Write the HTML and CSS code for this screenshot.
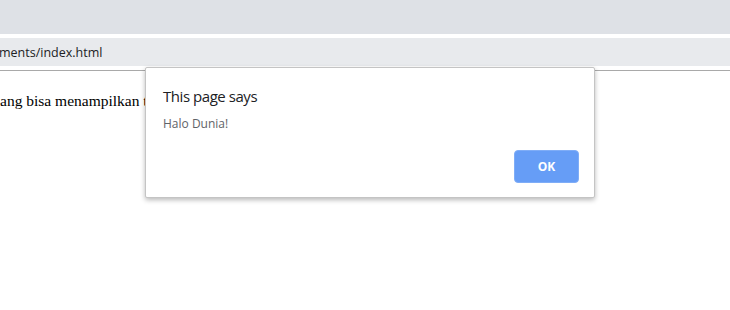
FILE: index.html
```html
<!DOCTYPE html>
<html>
<head>
<meta charset="utf-8">
<link rel="stylesheet" href="styles.css">
</head>
<body>
<div class="chrome">
  <div class="tabstrip"></div>
  <div class="toolbar"><span class="url">ments/index.html</span></div>
</div>
<div class="page">
  <p class="content">ang bisa menampilkan teks</p>
</div>
<div class="dialog">
  <div class="title">This page says</div>
  <div class="message">Halo Dunia!</div>
  <div class="actions"><button class="ok">OK</button></div>
</div>
</body>
</html>
```
FILE: styles.css
```css
html, body {
  margin: 0;
  padding: 0;
  background: #fff;
  width: 730px;
  height: 310px;
  overflow: hidden;
}
.chrome {
  display: flex;
  flex-direction: column;
  gap: 4px;
  padding-bottom: 4px;
  border-bottom: 1px solid #a9a9a9;
}
.tabstrip {
  height: 34px;
  background: #dee1e6;
}
.toolbar {
  height: 28px;
  background: #e8eaed;
  display: flex;
  align-items: center;
}
.url {
  font-family: "Open Sans", sans-serif;
  font-size: 12.5px;
  color: #202124;
  margin-left: -1px;
}
.page {
  padding-top: 21px;
}
.content {
  margin: 0;
  font-family: "Liberation Serif", serif;
  font-size: 15.5px;
  line-height: 18px;
  color: #000;
  white-space: nowrap;
}
.dialog {
  position: absolute;
  left: 145px;
  top: 67px;
  width: 448px;
  height: 129px;
  background: #fff;
  border: 1px solid #c4c4c4;
  border-radius: 2px;
  box-shadow: 0 2px 5px rgba(0,0,0,0.28);
  box-sizing: content-box;
  display: flex;
  flex-direction: column;
  font-family: "Open Sans", sans-serif;
}
.title {
  margin: 18px 0 0 17px;
  font-size: 15px;
  letter-spacing: -0.45px;
  line-height: 20px;
  color: #202124;
}
.message {
  margin: 10px 0 0 17px;
  font-size: 12px;
  line-height: 16px;
  color: #5f6368;
}
.actions {
  display: flex;
  justify-content: flex-end;
  margin-top: auto;
  padding: 0 15px 14px 0;
}
.ok {
  width: 65px;
  height: 33px;
  border: 1px solid #7fadf7;
  border-radius: 4px;
  background: #669df6;
  color: #fff;
  font-family: "Open Sans", sans-serif;
  font-weight: 700;
  font-size: 12px;
  padding: 0;
}
```
